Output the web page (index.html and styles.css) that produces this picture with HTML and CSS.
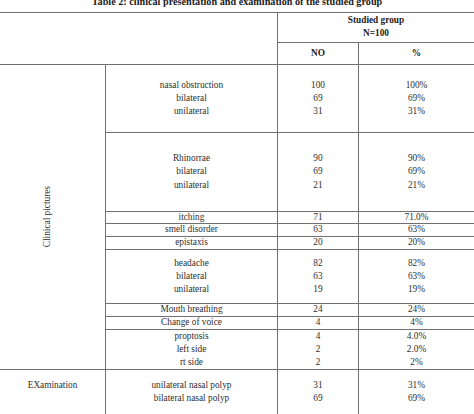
FILE: index.html
```html
<!DOCTYPE html>
<html>
<head>
<meta charset="utf-8">
<link rel="stylesheet" href="styles.css">
</head>
<body>
<div class="title">Table 2: clinical presentation and examination of the studied group</div>
<div class="table">
  <div class="cell head-blank"></div>
  <div class="cell head-group vl"><span>Studied group</span><span>N=100</span></div>
  <div class="cell head vl">NO</div>
  <div class="cell head vl">%</div>

  <div class="cell label-rot"><span class="rot">Clinical pictures</span></div>

  <div class="cell vl"><span>nasal obstruction</span><span>bilateral</span><span>unilateral</span></div>
  <div class="cell vl"><span>100</span><span>69</span><span>31</span></div>
  <div class="cell vl"><span>100%</span><span>69%</span><span>31%</span></div>

  <div class="cell vl"><span>Rhinorrae</span><span>bilateral</span><span>unilateral</span></div>
  <div class="cell vl"><span>90</span><span>69</span><span>21</span></div>
  <div class="cell vl"><span>90%</span><span>69%</span><span>21%</span></div>

  <div class="cell vl">itching</div>
  <div class="cell vl">71</div>
  <div class="cell vl">71.0%</div>

  <div class="cell vl">smell disorder</div>
  <div class="cell vl">63</div>
  <div class="cell vl">63%</div>

  <div class="cell vl">epistaxis</div>
  <div class="cell vl">20</div>
  <div class="cell vl">20%</div>

  <div class="cell vl"><span>headache</span><span>bilateral</span><span>unilateral</span></div>
  <div class="cell vl"><span>82</span><span>63</span><span>19</span></div>
  <div class="cell vl"><span>82%</span><span>63%</span><span>19%</span></div>

  <div class="cell vl">Mouth breathing</div>
  <div class="cell vl">24</div>
  <div class="cell vl">24%</div>

  <div class="cell vl">Change of voice</div>
  <div class="cell vl">4</div>
  <div class="cell vl">4%</div>

  <div class="cell vl"><span>proptosis</span><span>left side</span><span>rt side</span></div>
  <div class="cell vl"><span>4</span><span>2</span><span>2</span></div>
  <div class="cell vl"><span>4.0%</span><span>2.0%</span><span>2%</span></div>

  <div class="cell"><span>EXamination</span><span>&nbsp;</span></div>
  <div class="cell vl"><span>unilateral nasal polyp</span><span>bilateral nasal polyp</span></div>
  <div class="cell vl"><span>31</span><span>69</span></div>
  <div class="cell vl"><span>31%</span><span>69%</span></div>
</div>
</body>
</html>
```
FILE: styles.css
```css
html, body {
  margin: 0;
  padding: 0;
  overflow: hidden;
  background: #ffffff;
}
body {
  width: 474px;
  height: 414px;
  font-family: "Liberation Serif", "Times New Roman", serif;
  color: #2e2e2e;
}
.title {
  font-size: 10.2px;
  font-weight: bold;
  color: #1c1c1c;
  text-align: center;
  line-height: 12px;
  height: 12px;
  margin-top: -4px;
  margin-bottom: 4px;
  white-space: nowrap;
}
.table {
  display: grid;
  grid-template-columns: 105px 172px 81px 116px;
  grid-template-rows: 30px 22px 68px 79px 12px 13px 13px 54px 13px 13px 40px 45px;
  font-size: 9.3px;
  line-height: 13.3px;
}
.cell {
  box-sizing: border-box;
  border-top: 1px solid #707070;
  display: flex;
  flex-direction: column;
  align-items: center;
  justify-content: center;
  white-space: nowrap;
}
.vl {
  border-left: 1px solid #707070;
}
.head-blank {
  grid-column: span 2;
  grid-row: span 2;
}
.head-group {
  grid-column: span 2;
  justify-content: flex-start;
  padding-top: 0.5px;
  line-height: 13px;
  font-weight: bold;
  color: #1c1c1c;
}
.head {
  font-weight: bold;
  color: #1c1c1c;
}
.label-rot {
  grid-row: span 9;
  padding-right: 9px;
}
.rot {
  writing-mode: vertical-rl;
  transform: rotate(180deg);
}
```
